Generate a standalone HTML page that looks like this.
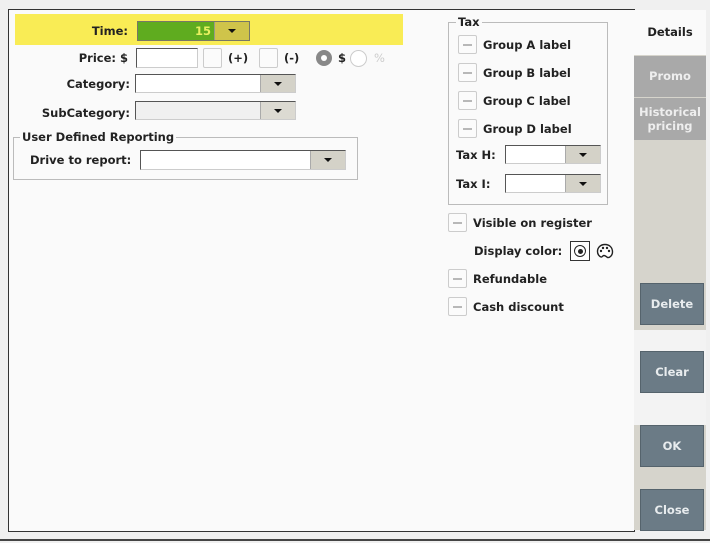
<!DOCTYPE html>
<html><head><style>
body{margin:0;width:710px;height:543px;background:#f0f0f0;position:relative;overflow:hidden;font-family:"DejaVu Sans",Verdana,sans-serif;font-weight:bold;font-size:11.5px;color:#222}
.a{position:absolute}
.main{position:absolute;left:8px;top:9px;width:625px;height:521px;background:#fafafa;border:1px solid #333}
.lbl{position:absolute;white-space:nowrap}
.r{text-align:right}
.inp{position:absolute;background:#fff;border:1px solid #555;border-right-color:#ccc;border-bottom-color:#ccc;box-sizing:border-box}
.cb{position:absolute;width:19px;height:19px;border:1px solid #ccc;box-sizing:border-box;background:#fbfbfb;border-radius:2px}
.cb:after{content:"";position:absolute;left:4px;top:8px;width:9px;height:1.5px;background:#b8b8b8}
.cb.n:after{display:none}
.btn{position:absolute;right:0;top:0;bottom:0;width:34px;background:#d4d2c8;border-left:1px solid #aaa}
.btn:after{content:"";position:absolute;left:13px;top:7px;border-left:4px solid transparent;border-right:4px solid transparent;border-top:4px solid #111}
.fs{position:absolute;border:1px solid #bbb}
.leg{position:absolute;background:#fafafa;padding:0 2px}
.sb{position:absolute;left:640px;width:64px;height:42px;background:#6b7b86;border:1px solid #55636c;box-sizing:border-box;color:#e8ecee;text-align:center;line-height:40px}
</style></head><body>
<div class="main"></div>
<div class="a" style="left:634px;top:10px;width:72px;height:520px;background:#d6d4cc"></div>
<div class="a" style="left:634px;top:330px;width:72px;height:95px;background:#f3f3f3"></div>
<div class="a" style="left:634px;top:10px;width:72px;height:45px;background:#fafafa;text-align:center;line-height:44px">Details</div>
<div class="a" style="left:634px;top:56px;width:72px;height:41px;background:#a9a9a9;color:#eee;text-align:center;line-height:40px">Promo</div>
<div class="a" style="left:634px;top:98px;width:72px;height:42px;background:#a9a9a9;color:#eee;text-align:center;line-height:14px;padding-top:7px;box-sizing:border-box">Historical<br>pricing</div>
<div class="sb" style="top:283px">Delete</div>
<div class="sb" style="top:351px">Clear</div>
<div class="sb" style="top:425px">OK</div>
<div class="sb" style="top:489px">Close</div>

<div class="a" style="left:15px;top:14px;width:388px;height:31px;background:#f9ec55"></div>
<div class="lbl r" style="left:30px;width:98px;top:24px">Time:</div>
<div class="a" style="left:137px;top:21px;width:113px;height:20px;border:1px solid #776;box-sizing:border-box;background:#5fac1f">
 <div class="a" style="right:38px;top:2px;color:#e8f060">15</div>
 <div class="btn" style="background:#cfc44a;border-left:1px solid #998"></div></div>

<div class="lbl r" style="left:30px;width:98px;top:51px">Price: $</div>
<div class="inp" style="left:136px;top:48px;width:62px;height:20px"></div>
<div class="cb n" style="left:203px;top:48px;height:20px"></div><div class="lbl" style="left:228px;top:51px">(+)</div>
<div class="cb n" style="left:259px;top:48px;height:20px"></div><div class="lbl" style="left:284px;top:51px">(-)</div>
<div class="a" style="left:316px;top:50px;width:16px;height:16px;border-radius:50%;background:#888;box-sizing:border-box"><div class="a" style="left:5px;top:5px;width:6px;height:6px;border-radius:50%;background:#fff"></div></div>
<div class="lbl" style="left:338px;top:51px">$</div>
<div class="a" style="left:350px;top:50px;width:17px;height:17px;border-radius:50%;border:1px solid #ccc;background:#fff;box-sizing:border-box"></div>
<div class="lbl" style="left:374px;top:51px;color:#ccc;font-weight:normal">%</div>

<div class="lbl r" style="left:20px;width:110px;top:77px">Category:</div>
<div class="inp" style="left:135px;top:74px;width:161px;height:19px"><div class="btn"></div></div>
<div class="lbl r" style="left:20px;width:110px;top:106px">SubCategory:</div>
<div class="inp" style="left:135px;top:101px;width:161px;height:19px;background:#f0f0f0"><div class="btn" style="background:#dcdad2"></div></div>

<div class="fs" style="left:13px;top:137px;width:343px;height:41px"></div>
<div class="leg" style="left:20px;top:130px">User Defined Reporting</div>
<div class="lbl" style="left:30px;top:153px">Drive to report:</div>
<div class="inp" style="left:140px;top:150px;width:206px;height:20px"><div class="btn"></div></div>

<div class="fs" style="left:448px;top:22px;width:158px;height:181px"></div>
<div class="leg" style="left:456px;top:15px">Tax</div>
<div class="cb" style="left:458px;top:35px"></div><div class="lbl" style="left:483px;top:38px">Group A label</div>
<div class="cb" style="left:458px;top:63px"></div><div class="lbl" style="left:483px;top:66px">Group B label</div>
<div class="cb" style="left:458px;top:91px"></div><div class="lbl" style="left:483px;top:94px">Group C label</div>
<div class="cb" style="left:458px;top:119px"></div><div class="lbl" style="left:483px;top:122px">Group D label</div>
<div class="lbl" style="left:456px;top:148px">Tax H:</div>
<div class="inp" style="left:505px;top:145px;width:96px;height:19px"><div class="btn"></div></div>
<div class="lbl" style="left:456px;top:177px">Tax I:</div>
<div class="inp" style="left:505px;top:174px;width:96px;height:19px"><div class="btn"></div></div>

<div class="cb" style="left:448px;top:213px"></div><div class="lbl" style="left:473px;top:216px">Visible on register</div>
<div class="lbl" style="left:474px;top:244px">Display color:</div>
<div class="a" style="left:570px;top:241px;width:20px;height:20px;border:1px solid #333;box-sizing:border-box;background:#fff">
 <div class="a" style="left:3px;top:3px;width:10px;height:10px;border:1.5px solid #222;border-radius:50%"></div>
 <div class="a" style="left:7px;top:7px;width:5px;height:5px;border-radius:50%;background:#222"></div></div>
<svg class="a" style="left:596px;top:243px" width="18" height="17" viewBox="0 0 18 17"><path d="M9 1.5C4.5 1.5 1.5 4.5 1.5 8.5c0 3 2 5 3.5 5.5c1.3.4 1.5-1.5 3-1.5s2 1 3.5 2c2 .5 5-2 5-5.5C16.5 4.5 13.5 1.5 9 1.5z" fill="#fff" stroke="#222" stroke-width="1.4"/><circle cx="5" cy="8" r="1.2" fill="#222"/><circle cx="7" cy="5" r="1.2" fill="#222"/><circle cx="11" cy="5" r="1.2" fill="#222"/><circle cx="13" cy="8" r="1.2" fill="#222"/></svg>
<div class="cb" style="left:448px;top:269px"></div><div class="lbl" style="left:473px;top:272px">Refundable</div>
<div class="cb" style="left:448px;top:297px"></div><div class="lbl" style="left:473px;top:300px">Cash discount</div>
<div class="a" style="left:0;top:539px;width:710px;height:2px;background:#444"></div>
</body></html>
